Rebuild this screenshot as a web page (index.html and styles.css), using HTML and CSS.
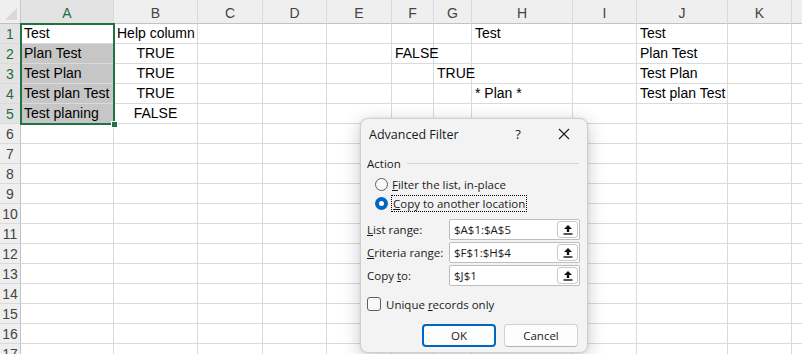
FILE: index.html
```html
<!DOCTYPE html>
<html>
<head>
<meta charset="utf-8">
<link rel="stylesheet" href="styles.css">
</head>
<body>
<div class="sheet">
  <div class="grid">
    <div class="hd corner"><span class="tri"></span></div>
    <div class="hd col sel-col">A</div>
    <div class="hd col">B</div>
    <div class="hd col">C</div>
    <div class="hd col">D</div>
    <div class="hd col">E</div>
    <div class="hd col">F</div>
    <div class="hd col">G</div>
    <div class="hd col">H</div>
    <div class="hd col">I</div>
    <div class="hd col">J</div>
    <div class="hd col">K</div>
    <div class="hd col last"></div>

    <div class="rh sel-row">1</div><div class="c">Test</div><div class="c">Help column</div><div class="c"></div><div class="c"></div><div class="c"></div><div class="c"></div><div class="c"></div><div class="c">Test</div><div class="c"></div><div class="c">Test</div><div class="c"></div><div class="c last"></div>
    <div class="rh sel-row">2</div><div class="c g">Plan Test</div><div class="c ctr">TRUE</div><div class="c"></div><div class="c"></div><div class="c"></div><div class="c">FALSE</div><div class="c"></div><div class="c"></div><div class="c"></div><div class="c">Plan Test</div><div class="c"></div><div class="c last"></div>
    <div class="rh sel-row">3</div><div class="c g">Test Plan</div><div class="c ctr">TRUE</div><div class="c"></div><div class="c"></div><div class="c"></div><div class="c"></div><div class="c">TRUE</div><div class="c"></div><div class="c"></div><div class="c">Test Plan</div><div class="c"></div><div class="c last"></div>
    <div class="rh sel-row">4</div><div class="c g">Test plan Test</div><div class="c ctr">TRUE</div><div class="c"></div><div class="c"></div><div class="c"></div><div class="c"></div><div class="c"></div><div class="c">* Plan *</div><div class="c"></div><div class="c">Test plan Test</div><div class="c"></div><div class="c last"></div>
    <div class="rh sel-row">5</div><div class="c g">Test planing</div><div class="c ctr">FALSE</div><div class="c"></div><div class="c"></div><div class="c"></div><div class="c"></div><div class="c"></div><div class="c"></div><div class="c"></div><div class="c"></div><div class="c"></div><div class="c last"></div>
    <div class="rh">6</div><div class="c"></div><div class="c"></div><div class="c"></div><div class="c"></div><div class="c"></div><div class="c"></div><div class="c"></div><div class="c"></div><div class="c"></div><div class="c"></div><div class="c"></div><div class="c last"></div>
    <div class="rh">7</div><div class="c"></div><div class="c"></div><div class="c"></div><div class="c"></div><div class="c"></div><div class="c"></div><div class="c"></div><div class="c"></div><div class="c"></div><div class="c"></div><div class="c"></div><div class="c last"></div>
    <div class="rh">8</div><div class="c"></div><div class="c"></div><div class="c"></div><div class="c"></div><div class="c"></div><div class="c"></div><div class="c"></div><div class="c"></div><div class="c"></div><div class="c"></div><div class="c"></div><div class="c last"></div>
    <div class="rh">9</div><div class="c"></div><div class="c"></div><div class="c"></div><div class="c"></div><div class="c"></div><div class="c"></div><div class="c"></div><div class="c"></div><div class="c"></div><div class="c"></div><div class="c"></div><div class="c last"></div>
    <div class="rh">10</div><div class="c"></div><div class="c"></div><div class="c"></div><div class="c"></div><div class="c"></div><div class="c"></div><div class="c"></div><div class="c"></div><div class="c"></div><div class="c"></div><div class="c"></div><div class="c last"></div>
    <div class="rh">11</div><div class="c"></div><div class="c"></div><div class="c"></div><div class="c"></div><div class="c"></div><div class="c"></div><div class="c"></div><div class="c"></div><div class="c"></div><div class="c"></div><div class="c"></div><div class="c last"></div>
    <div class="rh">12</div><div class="c"></div><div class="c"></div><div class="c"></div><div class="c"></div><div class="c"></div><div class="c"></div><div class="c"></div><div class="c"></div><div class="c"></div><div class="c"></div><div class="c"></div><div class="c last"></div>
    <div class="rh">13</div><div class="c"></div><div class="c"></div><div class="c"></div><div class="c"></div><div class="c"></div><div class="c"></div><div class="c"></div><div class="c"></div><div class="c"></div><div class="c"></div><div class="c"></div><div class="c last"></div>
    <div class="rh">14</div><div class="c"></div><div class="c"></div><div class="c"></div><div class="c"></div><div class="c"></div><div class="c"></div><div class="c"></div><div class="c"></div><div class="c"></div><div class="c"></div><div class="c"></div><div class="c last"></div>
    <div class="rh">15</div><div class="c"></div><div class="c"></div><div class="c"></div><div class="c"></div><div class="c"></div><div class="c"></div><div class="c"></div><div class="c"></div><div class="c"></div><div class="c"></div><div class="c"></div><div class="c last"></div>
    <div class="rh">16</div><div class="c"></div><div class="c"></div><div class="c"></div><div class="c"></div><div class="c"></div><div class="c"></div><div class="c"></div><div class="c"></div><div class="c"></div><div class="c"></div><div class="c"></div><div class="c last"></div>
    <div class="rh">17</div><div class="c"></div><div class="c"></div><div class="c"></div><div class="c"></div><div class="c"></div><div class="c"></div><div class="c"></div><div class="c"></div><div class="c"></div><div class="c"></div><div class="c"></div><div class="c last"></div>
  </div>

  <div class="selection"><span class="handle"></span></div>

  <div class="dlg">
    <div class="dlg-title">
      <span class="title">Advanced Filter</span>
      <span class="q">?</span>
      <span class="close">
        <svg width="12" height="12" viewBox="0 0 12 12"><path d="M1 1 L11 11 M11 1 L1 11" stroke="#1a1a1a" stroke-width="1.1" fill="none"/></svg>
      </span>
    </div>
    <div class="dlg-body">
      <div class="group"><span>Action</span><span class="rule"></span></div>
      <div class="radios">
        <label class="radio"><span class="dot"></span><span><u>F</u>ilter the list, in-place</span></label>
        <label class="radio on"><span class="dot"></span><span class="focus"><u>C</u>opy to another location</span></label>
      </div>
      <div class="fields">
        <span class="flabel"><u>L</u>ist range:</span>
        <div class="inp"><span class="val">$A$1:$A$5</span><span class="pick"><svg width="10" height="11" viewBox="0 0 10 11"><path d="M5 1 L9 5 L6.2 5 L6.2 8 L3.8 8 L3.8 5 L1 5 Z" fill="#111"/><rect x="0.5" y="9.3" width="9" height="1.4" fill="#111"/></svg></span></div>
        <span class="flabel"><u>C</u>riteria range:</span>
        <div class="inp"><span class="val">$F$1:$H$4</span><span class="pick"><svg width="10" height="11" viewBox="0 0 10 11"><path d="M5 1 L9 5 L6.2 5 L6.2 8 L3.8 8 L3.8 5 L1 5 Z" fill="#111"/><rect x="0.5" y="9.3" width="9" height="1.4" fill="#111"/></svg></span></div>
        <span class="flabel">Copy <u>t</u>o:</span>
        <div class="inp"><span class="val">$J$1</span><span class="pick"><svg width="10" height="11" viewBox="0 0 10 11"><path d="M5 1 L9 5 L6.2 5 L6.2 8 L3.8 8 L3.8 5 L1 5 Z" fill="#111"/><rect x="0.5" y="9.3" width="9" height="1.4" fill="#111"/></svg></span></div>
      </div>
      <label class="check"><span class="box"></span><span>Unique <u>r</u>ecords only</span></label>
      <div class="buttons">
        <span class="btn primary">OK</span>
        <span class="btn">Cancel</span>
      </div>
    </div>
  </div>
</div>
</body>
</html>
```

FILE: styles.css
```css
* { box-sizing: border-box; }
html, body { margin: 0; padding: 0; background: #fff; overflow: hidden; }
body { width: 802px; height: 354px; }

.sheet {
  position: relative;
  width: 802px;
  height: 354px;
  overflow: hidden;
  font-family: "Open Sans", "Liberation Sans", sans-serif;
}

.grid {
  display: grid;
  grid-template-columns: 21px 93px 84px 65px 64px 65px 42px 38px 101px 64px 91px 64px 10px;
  grid-template-rows: 24px repeat(17, 20px);
  font-family: "Liberation Sans", Arial, sans-serif;
  font-size: 14px;
  color: #000;
}

.hd {
  background: #efefef;
  border-bottom: 1px solid #c2c2c2;
  border-right: 1px solid #d9d9d9;
  color: #444;
  font-size: 14px;
  display: flex;
  align-items: center;
  justify-content: center;
  padding-top: 2px;
}
.hd.col { border-right: 1px solid #dadada; }
.hd.sel-col { background: #e3e3e3; color: #1e6b3f; }
.hd.last { border-right: none; }
.corner { position: relative; border-right: 1px solid #c6c6c6; }
.tri {
  position: absolute;
  right: 3px;
  bottom: 3px;
  width: 0; height: 0;
  border-left: 12px solid transparent;
  border-bottom: 12px solid #d8d8d8;
}

.rh {
  background: #efefef;
  border-right: 1px solid #c2c2c2;
  border-bottom: 1px solid #dadada;
  color: #444;
  font-size: 14px;
  display: flex;
  align-items: center;
  justify-content: center;
}
.rh.sel-row { background: #e3e3e3; color: #1e6b3f; }

.c {
  border-right: 1px solid #dadada;
  border-bottom: 1px solid #dadada;
  padding: 0 3px;
  display: flex;
  align-items: center;
  white-space: nowrap;
  overflow: visible;
  line-height: 19px;
}
.c.last { border-right: none; }
.c.ctr { justify-content: center; }
.c.g { background: #c6c6c6; }

.selection {
  position: absolute;
  left: 20px;
  top: 23px;
  width: 95px;
  height: 102px;
  border: 2px solid #217346;
  pointer-events: none;
}
.handle {
  position: absolute;
  right: -5px;
  bottom: -5px;
  width: 7px;
  height: 7px;
  background: #217346;
  border: 1px solid #fff;
}

/* dialog */
.dlg {
  position: absolute;
  left: 360px;
  top: 118px;
  width: 228px;
  height: 235px;
  background: #f3f3f3;
  border: 1px solid #cfcfcf;
  border-radius: 8px;
  box-shadow: 0 4px 18px rgba(0,0,0,0.22), 0 0 3px rgba(0,0,0,0.08);
  font-family: "Open Sans", "Liberation Sans", sans-serif;
  font-size: 11.5px;
  color: #1a1a1a;
  display: flex;
  flex-direction: column;
}
.dlg-title {
  height: 30px;
  display: flex;
  align-items: center;
  padding: 0 0 0 8px;
}
.title { font-size: 12.5px; flex: 1; padding-top: 1px; }
.q { font-size: 13px; width: 46px; text-align: center; margin-right: 0; }
.close { width: 46px; height: 30px; display: flex; align-items: center; justify-content: center; }

.dlg-body { padding: 6px 8px 0 6px; display: flex; flex-direction: column; }

.group { display: flex; align-items: center; gap: 6px; height: 16px; }
.group .rule { flex: 1; height: 1px; background: #d6d6d6; margin-top: 1px; }

.radios { display: flex; flex-direction: column; padding: 4px 0 0 8px; gap: 0; }
.radio { display: flex; align-items: center; gap: 4px; height: 19px; }
.dot {
  width: 13px; height: 13px;
  border: 1px solid #5e5e5e;
  border-radius: 50%;
  background: #fafafa;
  flex: none;
}
.radio.on .dot {
  border: 4px solid #0067c0;
  background: #fff;
}
.focus { outline: 1px dotted #000; outline-offset: 0; padding: 0 1px; line-height: 15px; }

.fields {
  display: grid;
  grid-template-columns: 82px 131px;
  grid-auto-rows: 21px;
  row-gap: 2px;
  margin-top: 6px;
  align-items: center;
}
.inp {
  height: 21px;
  background: #fff;
  border: 1px solid #bdbdbd;
  border-radius: 2px;
  display: flex;
  align-items: center;
  justify-content: space-between;
  padding: 0 1px 0 4px;
  font-size: 11.5px;
}
.pick {
  width: 21px; height: 17px;
  border: 1px solid #c8c8c8;
  border-radius: 3px;
  display: flex; align-items: center; justify-content: center;
  background: #fff;
}

.check { display: flex; align-items: center; gap: 5px; margin-top: 10px; height: 16px; }
.box {
  width: 14px; height: 14px;
  border: 1px solid #5e5e5e;
  border-radius: 3px;
  background: #fafafa;
}

.buttons { display: flex; justify-content: flex-end; gap: 8px; margin-top: 12px; padding-right: 1px; }
.btn {
  width: 74px; height: 23px;
  border: 1px solid #d0d0d0;
  border-bottom-color: #b5b5b5;
  border-radius: 4px;
  background: #fdfdfd;
  display: flex; align-items: center; justify-content: center;
}
.btn.primary { border: 2px solid #0067c0; }
```
